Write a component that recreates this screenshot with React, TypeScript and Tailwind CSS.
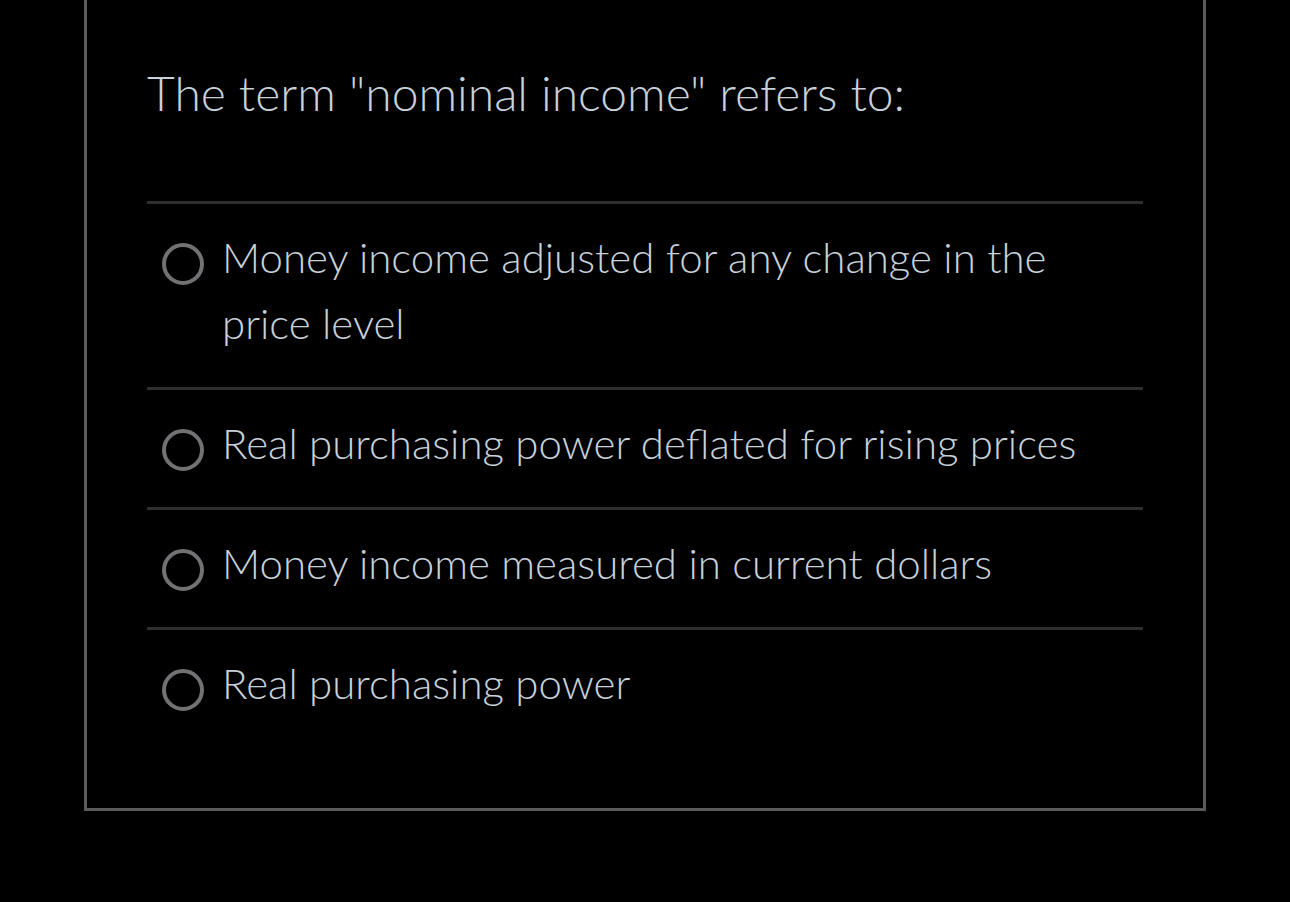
import { FC } from 'react';

const options = [
  'Money income adjusted for any change in the price level',
  'Real purchasing power deflated for rising prices',
  'Money income measured in current dollars',
  'Real purchasing power',
];

const Radio: FC = () => (
  <span className="mt-[19px] block h-[42px] w-[42px] shrink-0 rounded-full border-[4px] border-[#727275]" />
);

const App: FC = () => {
  return (
    <div className="min-h-[902px] w-full bg-black pb-[90px] font-['Lato','Open_Sans',sans-serif]">
      <div className="ml-[84px] w-[1122px] border-x-[3px] border-b-[3px] border-[#5a5a5a] px-[60px] pb-[92px]">
        <h1 className="pt-[59px] text-[48px] font-light leading-[68px] text-[#c6d1da]">
          The term &quot;nominal income&quot; refers to:
        </h1>

        <div className="mt-[74px]">
          {options.map((opt, i) => (
            <div
              key={i}
              className={`flex gap-[18px] border-t-[3px] border-[#2e2e2e] pl-[15px] pr-[40px] pt-[20px] ${i === options.length - 1 ? 'pb-0' : 'pb-[31px]'}`}
            >
              <Radio />
              <p className="text-[42px] font-light leading-[66px] text-[#c6d1da]">{opt}</p>
            </div>
          ))}
        </div>
      </div>
    </div>
  );
};

export default App;
